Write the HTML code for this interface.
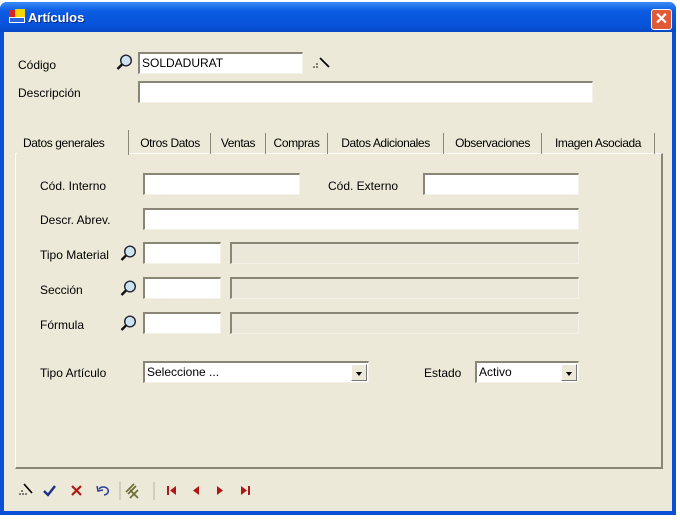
<!DOCTYPE html>
<html><head><style>
*{margin:0;padding:0;box-sizing:border-box}
body{width:680px;height:520px;background:#fff;position:relative;overflow:hidden;font-family:"Liberation Sans",sans-serif;font-size:12px;color:#000}
.a{position:absolute}
.win{left:0;top:2px;width:676px;height:513px;background:#0a4fd6;border-radius:7px 7px 0 0}
.title{left:0;top:2px;width:676px;height:30px;border-radius:7px 7px 0 0;background:linear-gradient(#3a8cf5,#0b5ce3 30%,#0752d8 80%,#0647c4)}
.client{left:4px;top:32px;width:668px;height:479px;background:#ece9d8}
.t{color:#fff;font-weight:bold;font-size:13px;left:28px;top:10px;text-shadow:1px 1px #0a2a80}
.inp{background:#fff;border-top:2px solid #8a8676;border-left:2px solid #8a8676;border-right:1px solid #f4f2e8;border-bottom:1px solid #f4f2e8;height:22px;padding:2px 2px;font-size:12px}
.dis{background:#ebe8da}
.lbl{font-size:12px}
.panel{left:15px;top:153px;width:648px;height:316px;border:1px solid #fff;border-right:2px solid #8a8676;border-bottom:2px solid #8a8676;background:#ece9d8}
.tab{top:133px;height:21px;padding-top:3px;font-size:12px;letter-spacing:-0.4px;border-right:1px solid #8a8676;text-align:center;white-space:nowrap}
.dd{position:absolute;right:1px;top:1px;width:16px;height:17px;background:#ece9d8;border:1px solid #fff;border-right-color:#777;border-bottom-color:#777}
.dd:after{content:"";position:absolute;left:4px;top:7px;border:3px solid transparent;border-top:4px solid #000}
</style></head><body>
<div class="a win"></div>
<div class="a title"></div>
<div class="a" style="left:9px;top:10px;width:8px;height:8px;background:#d22"></div>
<div class="a" style="left:15px;top:9px;width:10px;height:8px;background:#f6d500"></div>
<div class="a" style="left:9px;top:17px;width:16px;height:6px;background:#2a66d8;border:1px solid #fff"></div>
<div class="a t">Artículos</div>
<div class="a" style="left:651px;top:9px;width:21px;height:21px;background:#e05a35;border:1px solid #fff;border-radius:3px;color:#fff;font-weight:bold;font-size:16px;text-align:center;line-height:19px">✕</div>
<div class="a client"></div>

<svg class="a" width="0" height="0"><defs><g id="mg"><circle cx="10" cy="6.5" r="5.3" fill="#cde4f0" stroke="#223" stroke-width="1.4"/><line x1="6" y1="10.5" x2="1.5" y2="15" stroke="#111" stroke-width="2.4"/></g></defs></svg>

<div class="a lbl" style="left:18px;top:58px">Código</div>
<svg class="a" style="left:116px;top:54px" width="17" height="17"><use href="#mg"/></svg>
<div class="a inp" style="left:138px;top:52px;width:165px">SOLDADURAT</div>
<svg class="a" style="left:312px;top:56px" width="20" height="14"><line x1="8" y1="2" x2="17" y2="11" stroke="#000" stroke-width="1.8"/><circle cx="5" cy="8" r=".8"/><circle cx="2" cy="11" r=".8"/><circle cx="5" cy="11" r=".8"/></svg>
<div class="a lbl" style="left:18px;top:86px">Descripción</div>
<div class="a inp" style="left:138px;top:81px;width:455px"></div>

<div class="a panel"></div>
<div class="a" style="left:17px;top:130px;width:112px;height:25px;background:#ece9d8;border-right:1px solid #8a8676"></div>
<div class="a" style="left:23px;top:136px;letter-spacing:-0.4px">Datos generales</div>
<div class="a tab" style="left:130px;width:81px">Otros Datos</div>
<div class="a tab" style="left:211px;width:55px">Ventas</div>
<div class="a tab" style="left:266px;width:62px">Compras</div>
<div class="a tab" style="left:328px;width:116px">Datos Adicionales</div>
<div class="a tab" style="left:444px;width:98px">Observaciones</div>
<div class="a tab" style="left:542px;width:113px">Imagen Asociada</div>

<div class="a lbl" style="left:40px;top:179px">Cód. Interno</div>
<div class="a inp" style="left:143px;top:173px;width:157px"></div>
<div class="a lbl" style="left:328px;top:179px">Cód. Externo</div>
<div class="a inp" style="left:423px;top:173px;width:156px"></div>
<div class="a lbl" style="left:40px;top:213px">Descr. Abrev.</div>
<div class="a inp" style="left:143px;top:208px;width:436px"></div>

<div class="a lbl" style="left:40px;top:248px">Tipo Material</div>
<svg class="a" style="left:120px;top:245px" width="17" height="17"><use href="#mg"/></svg>
<div class="a inp" style="left:143px;top:242px;width:78px"></div>
<div class="a inp dis" style="left:230px;top:242px;width:349px"></div>
<div class="a lbl" style="left:40px;top:283px">Sección</div>
<svg class="a" style="left:120px;top:280px" width="17" height="17"><use href="#mg"/></svg>
<div class="a inp" style="left:143px;top:277px;width:78px"></div>
<div class="a inp dis" style="left:230px;top:277px;width:349px"></div>
<div class="a lbl" style="left:40px;top:318px">Fórmula</div>
<svg class="a" style="left:120px;top:315px" width="17" height="17"><use href="#mg"/></svg>
<div class="a inp" style="left:143px;top:312px;width:78px"></div>
<div class="a inp dis" style="left:230px;top:312px;width:349px"></div>

<div class="a lbl" style="left:40px;top:366px">Tipo Artículo</div>
<div class="a inp" style="left:143px;top:361px;width:226px">Seleccione ...<span class="dd"></span></div>
<div class="a lbl" style="left:424px;top:366px">Estado</div>
<div class="a inp" style="left:475px;top:361px;width:104px">Activo<span class="dd"></span></div>

<svg class="a" style="left:16px;top:480px" width="250" height="22">
<line x1="8" y1="4" x2="16" y2="13" stroke="#000" stroke-width="1.6"/><circle cx="6" cy="11" r=".8"/><circle cx="4" cy="14" r=".8"/><circle cx="7" cy="14" r=".8"/><circle cx="10" cy="14" r=".8"/>
<path d="M28 11 L32 15 L39 6" stroke="#1b2f8a" stroke-width="2.4" fill="none"/>
<path d="M56 6 L65 15 M65 6 L56 15" stroke="#b01818" stroke-width="2.2"/>
<path d="M83 9 A5 4 0 1 1 88 15 M81 6 L82 11 L87 10" stroke="#2a3f9a" stroke-width="1.5" fill="none"/>
<line x1="104" y1="2" x2="104" y2="20" stroke="#b8b4a0"/>
<path d="M110 12 L118 4 M112 14 L120 6 M114 10 L122 18 M122 10 L114 18" stroke="#6a6a30" stroke-width="1.6"/>
<line x1="138" y1="2" x2="138" y2="20" stroke="#b8b4a0"/>
<rect x="151" y="6" width="2" height="9" fill="#b01818"/><path d="M160 6 L154 10.5 L160 15Z" fill="#b01818"/>
<path d="M183 6 L177 10.5 L183 15Z" fill="#b01818"/>
<path d="M201 6 L207 10.5 L201 15Z" fill="#b01818"/>
<path d="M225 6 L231 10.5 L225 15Z" fill="#b01818"/><rect x="232" y="6" width="2" height="9" fill="#b01818"/>
</svg>
</body></html>
